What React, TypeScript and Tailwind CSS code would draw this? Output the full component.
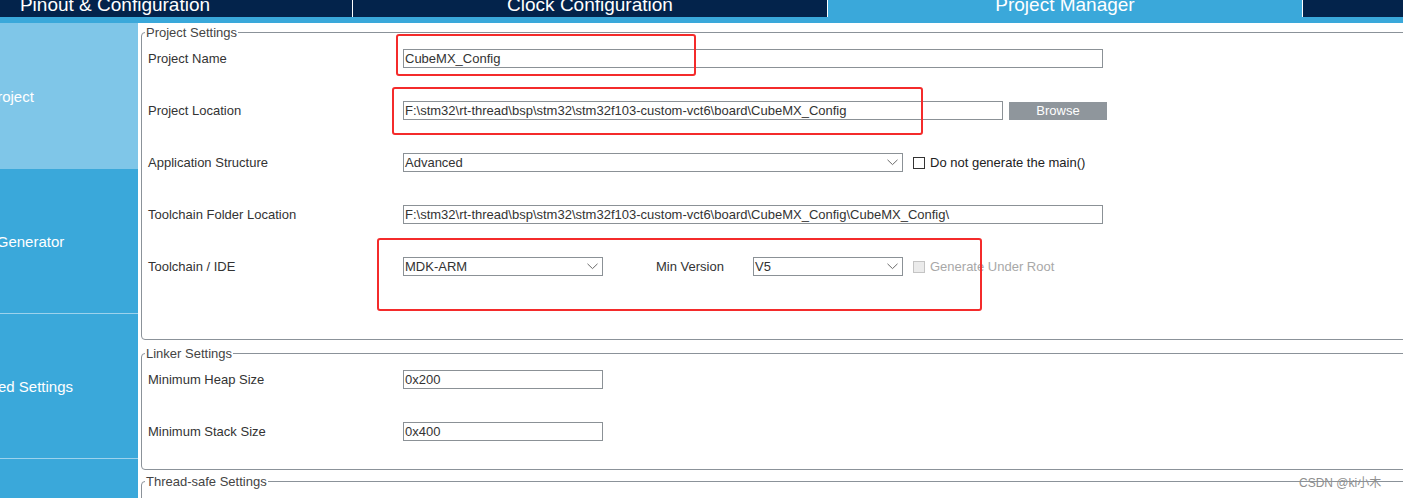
import React from "react";

const tabs = [
  { label: "Pinout & Configuration", active: false },
  { label: "Clock Configuration", active: false },
  { label: "Project Manager", active: true },
  { label: "Tools", active: false },
];

function Chevron() {
  return (
    <svg width="11" height="7" viewBox="0 0 11 7" className="shrink-0">
      <path d="M0.5 0.8 L5.5 5.6 L10.5 0.8" fill="none" stroke="#6b6b6b" strokeWidth="1" />
    </svg>
  );
}

function TextBox({ value, width }: { value: string; width: string }) {
  return (
    <div className={`${width} h-[19px] shrink-0 border border-[#8b9196] bg-white px-[1px] text-[13px] leading-[17px] text-[#333] whitespace-nowrap overflow-hidden`}>
      {value}
    </div>
  );
}

function Select({ value, width }: { value: string; width: string }) {
  return (
    <div className={`${width} h-[19px] shrink-0 border border-[#8b9196] bg-white pl-[1px] pr-[4px] flex items-center justify-between text-[13px] text-[#333]`}>
      <span className="leading-[17px]">{value}</span>
      <Chevron />
    </div>
  );
}

function Check({ label, disabled }: { label: string; disabled?: boolean }) {
  return (
    <div className="flex items-center h-[19px] gap-[5px]">
      <div
        className={
          disabled
            ? "w-[12px] h-[12px] border border-[#c4c4c4] bg-[#ebebeb]"
            : "w-[12px] h-[12px] border border-[#333] bg-white"
        }
      />
      <span className={disabled ? "text-[13px] text-[#a8a8a8]" : "text-[13px] text-[#222]"}>{label}</span>
    </div>
  );
}

function Row({ label, children }: { label: string; children: React.ReactNode }) {
  return (
    <div className="flex items-start h-[52px] pt-[9px]">
      <div className="w-[255px] shrink-0 h-[19px] leading-[20px] text-[13px] text-[#333]">{label}</div>
      <div className="flex items-center">{children}</div>
    </div>
  );
}

function Group({ title, className, children }: { title: string; className: string; children?: React.ReactNode }) {
  return (
    <fieldset className={`w-[1300px] border border-[#8b9299] rounded-[4px] pl-[6px] ${className}`}>
      <legend className="-ml-[3px] px-[1px] text-[13px] leading-[15px] text-[#444]">{title}</legend>
      {children}
    </fieldset>
  );
}

function SideItem({ label, className }: { label: string; className: string }) {
  return (
    <div className={`shrink-0 flex items-center ${className}`}>
      <div className="w-[260px] -ml-[117px] text-center text-white text-[15px] leading-none">{label}</div>
    </div>
  );
}

export default function App() {
  return (
    <div className="relative w-[1403px] h-[498px] overflow-hidden bg-white font-['Liberation_Sans','Noto_Sans_CJK_SC',sans-serif]">
      {/* top tabs */}
      <div className="h-[17px] bg-[#03234b] overflow-hidden flex">
        <div className="-ml-[122px] flex">
          {tabs.map((t) => (
            <div
              key={t.label}
              className={`w-[475px] shrink-0 h-[17px] border-r border-white text-center text-white text-[19px] leading-[17px] ${
                t.active ? "bg-[#3aa8da]" : ""
              }`}
            >
              <span className="block -mt-[4px]">{t.label}</span>
            </div>
          ))}
        </div>
      </div>
      <div className="h-[6px] bg-[#3aa8da]" />

      <div className="flex h-[475px]">
        {/* sidebar */}
        <div className="w-[138px] shrink-0 flex flex-col overflow-hidden bg-[#3aa8da]">
          <SideItem label="Project" className="h-[146px] bg-[#7fc6e8]" />
          <SideItem label="Code Generator" className="h-[144px]" />
          <SideItem label="Advanced Settings" className="h-[145px] border-t border-[#9dd2ec]" />
          <div className="flex-1 border-t border-[#9dd2ec]" />
        </div>

        {/* content */}
        <div className="flex-1 overflow-hidden pl-[3px] pt-[2px]">
          <Group title="Project Settings" className="pb-[39px]">
            <Row label="Project Name">
              <TextBox value="CubeMX_Config" width="w-[700px]" />
            </Row>
            <Row label="Project Location">
              <TextBox value="F:\stm32\rt-thread\bsp\stm32\stm32f103-custom-vct6\board\CubeMX_Config" width="w-[600px]" />
              <div className="ml-[6px] w-[98px] h-[18px] bg-[#8f969c] text-white text-[13px] leading-[18px] text-center">Browse</div>
            </Row>
            <Row label="Application Structure">
              <Select value="Advanced" width="w-[500px]" />
              <div className="ml-[10px]">
                <Check label="Do not generate the main()" />
              </div>
            </Row>
            <Row label="Toolchain Folder Location">
              <TextBox value="F:\stm32\rt-thread\bsp\stm32\stm32f103-custom-vct6\board\CubeMX_Config\CubeMX_Config\" width="w-[700px]" />
            </Row>
            <Row label="Toolchain / IDE">
              <Select value="MDK-ARM" width="w-[200px]" />
              <div className="ml-[53px] w-[97px] text-[13px] text-[#333]">Min Version</div>
              <Select value="V5" width="w-[150px]" />
              <div className="ml-[10px]">
                <Check label="Generate Under Root" disabled />
              </div>
            </Row>
          </Group>

          <Group title="Linker Settings" className="mt-[6px] pb-[4px]">
            <Row label="Minimum Heap Size">
              <TextBox value="0x200" width="w-[200px]" />
            </Row>
            <Row label="Minimum Stack Size">
              <TextBox value="0x400" width="w-[200px]" />
            </Row>
          </Group>

          <Group title="Thread-safe Settings" className="mt-[4px] h-[60px]" />
        </div>
      </div>

      {/* red annotation boxes */}
      <div className="absolute left-[396px] top-[34px] w-[300px] h-[42px] border-2 border-[#f42b2b] rounded-[3px]" />
      <div className="absolute left-[392px] top-[87px] w-[531px] h-[48px] border-2 border-[#f42b2b] rounded-[3px]" />
      <div className="absolute left-[377px] top-[238px] w-[605px] h-[73px] border-2 border-[#f42b2b] rounded-[3px]" />

      {/* watermark */}
      <div className="absolute left-[1299px] top-[475px] text-[12px] leading-[16px] text-[#8f8f8f]">CSDN @ki小木</div>
    </div>
  );
}
